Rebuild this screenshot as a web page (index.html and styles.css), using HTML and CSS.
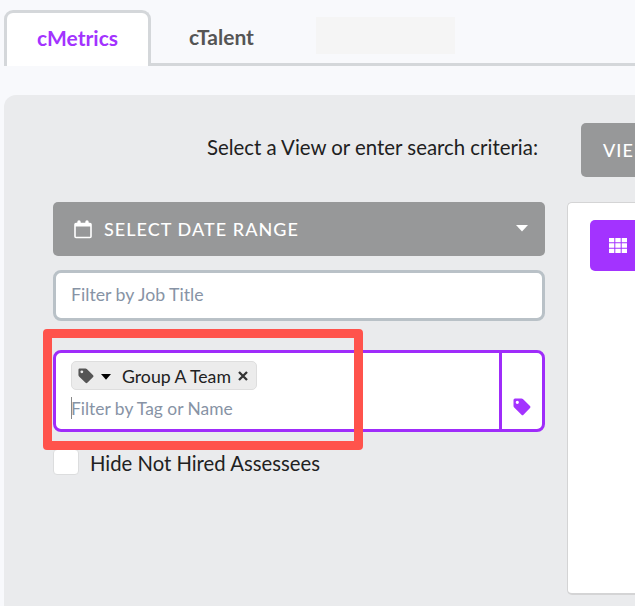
FILE: index.html
```html
<!DOCTYPE html>
<html lang="en">
<head>
<meta charset="utf-8">
<title>cMetrics</title>
<link rel="stylesheet" href="styles.css">
</head>
<body>
<nav class="tabs">
  <a class="tab active">cMetrics</a>
  <a class="tab">cTalent</a>
  <span class="tab-blank"></span>
</nav>
<main class="panel">
  <header class="toolbar">
    <span class="prompt">Select a View or enter search criteria:</span>
    <button class="btn view-btn">VIE</button>
  </header>
  <div class="columns">
    <section class="filters">
      <button class="btn date-btn">
        <svg class="calendar" viewBox="0 0 18 19"><path fill="none" stroke="#fff" stroke-width="1.6" d="M2 3.500h14a1 1 0 0 1 1 1v12a1 1 0 0 1-1 1H2a1 1 0 0 1-1-1v-12a1 1 0 0 1 1-1z"/><path fill="#fff" d="M1 3.500h16v3H1zM3.300 2a1.700 1.700 0 0 1 3.400 0v3H3.300zM11.300 2a1.700 1.700 0 0 1 3.400 0v3h-3.400z"/></svg>
        <span class="date-label">SELECT DATE RANGE</span>
        <svg class="caret" viewBox="0 0 12 7"><path fill="#fff" d="M0 0h12L6 6.500z"/></svg>
      </button>
      <div class="job-input"><span class="placeholder">Filter by Job Title</span></div>
      <div class="tag-field">
        <div class="tag-main">
          <div class="chip">
            <svg class="chip-tag" viewBox="0 0 18 18"><path fill="#555" fill-rule="evenodd" d="M2 .5h6.500q.8 0 1.400.6l7.100 7q1 1 0 2l-6.500 6.600q-1 1-2 0L1.200 9.500Q.5 8.800.5 8V2Q.5.500 2 .500zM4.300 2.700a1.600 1.600 0 1 0 0 3.200 1.600 1.600 0 0 0 0-3.200z"/></svg>
            <svg class="chip-caret" viewBox="0 0 10 6"><path d="M0 0h10L5 5.800z"/></svg>
            <span class="chip-text">Group A Team</span>
            <svg class="chip-close" viewBox="0 0 10 10"><path fill="none" stroke="#333" stroke-width="2.300" d="M1 1l8 8M9 1L1 9"/></svg>
          </div>
          <div class="entry"><span class="placeholder tag-hint">Filter by Tag or Name</span></div>
          <div class="highlight"></div>
        </div>
        <div class="tag-side">
          <svg viewBox="0 0 18 18"><path fill="#a333ff" fill-rule="evenodd" d="M2 .5h6.500q.8 0 1.400.6l7.100 7q1 1 0 2l-6.500 6.600q-1 1-2 0L1.200 9.500Q.5 8.800.5 8V2Q.5.500 2 .500zM4.300 2.700a1.600 1.600 0 1 0 0 3.200 1.600 1.600 0 0 0 0-3.200z"/></svg>
        </div>
      </div>
      <label class="check"><span class="box"></span><span class="check-text">Hide Not Hired Assessees</span></label>
    </section>
    <section class="results">
      <button class="grid-btn">
        <svg viewBox="0 0 18 15"><path fill="#fff" d="M0 0h5.300v4.300H0zM6.300 0h5.400v4.300H6.300zM12.700 0H18v4.300h-5.300zM0 5.300h5.300v4.400H0zM6.300 5.300h5.400v4.400H6.300zM12.700 5.300H18v4.400h-5.300zM0 10.700h5.300V15H0zM6.300 10.700h5.400V15H6.300zM12.700 10.700H18V15h-5.300z"/></svg>
      </button>
    </section>
  </div>
</main>
</body>
</html>
```
FILE: styles.css
```css
* { box-sizing: border-box; }
body { margin: 0; width: 635px; height: 606px; overflow: hidden; background: #f8f9fc; color: #212121; font-family: Lato, sans-serif; }
button { font: inherit; border: 0; margin: 0; }
svg { display: block; flex: none; }
span { white-space: nowrap; }

.tabs { display: flex; height: 66px; padding: 10px 0 0 4px; background: linear-gradient(#d4d7da, #d4d7da) 150px 63px / 100% 3px no-repeat; }
.tab { display: flex; justify-content: center; align-items: center; width: 141px; height: 56px; padding-bottom: 3px; font-size: 21px; font-weight: 700; color: #555; }
.tab.active { width: 147px; padding-bottom: 5px; background: #fff; border: 3px solid #d4d7da; border-bottom: 0; border-radius: 9px 9px 0 0; color: #a333ff; }
.tab-blank { width: 139px; height: 37px; margin: 7px 0 0 24px; background: #f5f5f5; }

.panel { height: 511px; margin: 29px 0 0 4px; padding: 28px 0 0 49px; background: #eaebed; border-radius: 12px 0 0 0; }
.toolbar { display: flex; align-items: center; height: 54px; }
.prompt { width: 485px; text-align: right; font-size: 20.400px; padding-bottom: 7px; }
.btn { display: flex; align-items: center; background: #979899; color: #fff; border-radius: 5px; font-size: 18px; font-weight: 500; letter-spacing: 1.050px; }
.view-btn { flex: 1; height: 54px; margin-left: 43px; padding: 0 0 0 22px; border-radius: 5px 0 0 5px; }

.columns { display: flex; gap: 21px; margin-top: 25px; }
.filters { flex: none; width: 493px; }
.date-btn { width: 492px; height: 54px; padding: 0 17px 0 21px; }
.calendar { width: 18px; height: 19px; }
.date-label { flex: 1; margin-left: 12px; padding-bottom: 1px; text-align: left; }
.caret { width: 12px; height: 7px; margin-bottom: 2px; }
.job-input { display: flex; align-items: center; width: 492px; height: 51px; margin-top: 14px; padding: 0 0 3px 15px; background: #fff; border: 3px solid #b9c1c7; border-radius: 8px; }
.placeholder { color: #8793a5; font-size: 17.700px; }
.tag-hint { font-size: 17.400px; margin-left: -1px; }

.tag-field { display: flex; width: 492px; height: 82px; margin-top: 29px; background: #fff; border: 3px solid #9f2cfa; border-radius: 8px; }
.tag-main { position: relative; flex: 1; padding: 8px 0 0 15px; }
.chip { display: flex; align-items: center; width: 186px; height: 29px; padding-left: 6px; background: #ececec; border: 1px solid #dedede; border-radius: 5px; }
.chip-tag { width: 16px; height: 16px; margin-top: 1px; }
.chip-caret { width: 10px; height: 6px; margin: 3px 0 0 7px; }
.chip-text { width: 108px; margin: 1px 0 0 11px; font-size: 17.700px; }
.chip-close { width: 10px; height: 10px; margin-left: 8px; }
.entry { display: flex; align-items: center; width: 200px; height: 22px; margin-top: 7px; border-left: 1px solid #888; }
.highlight { position: absolute; left: -13px; top: -24px; width: 320px; height: 121px; border: 9px solid #ff534c; border-radius: 4px; }
.tag-side { width: 43px; padding: 45px 0 0 11px; border-left: 3px solid #9f2cfa; }
.tag-side svg { width: 18px; height: 18px; }

.check { display: flex; align-items: center; margin-top: 17px; }
.box { width: 26px; height: 26px; background: #fff; border: 1px solid #dcddde; border-radius: 4px; }
.check-text { margin: 2px 0 0 11px; font-size: 20.300px; }

.results { flex: 1; height: 393px; padding: 17px 0 0 22px; background: #fff; border: 1px solid #d4d4d5; border-right: 0; border-bottom-width: 2px; border-radius: 5px 0 0 5px; }
.grid-btn { display: flex; align-items: center; width: 100%; height: 51px; padding: 0 0 0 19px; background: #a333ff; border-radius: 5px 0 0 5px; }
.grid-btn svg { width: 18px; height: 15px; }
```
